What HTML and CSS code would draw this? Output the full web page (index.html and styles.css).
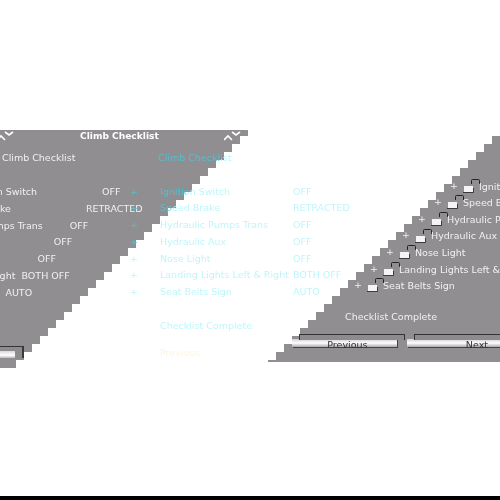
FILE: index.html
```html
<!DOCTYPE html>
<html lang="en">
<head>
<meta charset="utf-8">
<title>Climb Checklist</title>
<link rel="stylesheet" href="styles.css">
</head>
<body>
<main class="stage">
  <svg class="backdrop" width="500" height="496" viewBox="0 0 500 496" aria-hidden="true">
    <polygon class="shape" points="0,130 248,130 248,136 240,136 240,144 232,144 232,152 224,152 224,160 216,160 216,168 208,168 208,176 200,176 200,184 192,184 192,192 184,192 184,200 176,200 176,208 168,208 168,216 160,216 160,224 152,224 152,232 144,232 144,240 136,240 136,248 128,248 128,256 120,256 120,264 112,264 112,272 104,272 104,280 96,280 96,288 88,288 88,296 80,296 80,304 72,304 72,312 64,312 64,320 56,320 56,328 48,328 48,336 40,336 40,344 32,344 32,352 24,352 24,360 16,360 16,368 0,368"/>
    <polygon class="shape" points="500,128 500,362 268,362 268,360 276,360 276,352 284,352 284,344 292,344 292,336 300,336 300,328 308,328 308,320 316,320 316,312 324,312 324,304 332,304 332,296 340,296 340,288 348,288 348,280 356,280 356,272 364,272 364,264 372,264 372,256 380,256 380,248 388,248 388,240 396,240 396,232 404,232 404,224 412,224 412,216 420,216 420,208 428,208 428,200 436,200 436,192 444,192 444,184 452,184 452,176 460,176 460,168 468,168 468,160 476,160 476,152 484,152 484,144 492,144 492,136 500,136"/>
  </svg>

  <section class="panel panel-left">
    <header class="titlebar">
      <svg class="chev chev-l" width="18" height="10" viewBox="0 0 18 10" aria-hidden="true"><path d="M0 9l4-4 4 4M8 1l4 3 4-3"/></svg>
      <h1 class="title">Climb Checklist</h1>
      <svg class="chev chev-r" width="18" height="10" viewBox="0 0 18 10" aria-hidden="true"><path d="M0 9l4-4 4 4M8 1l4 3 4-3"/></svg>
    </header>
    <h2 class="subtitle">Climb Checklist</h2>
    <ul class="rows rows-left">
      <li class="row"><span class="label">Ignition Switch</span><span>OFF</span></li>
      <li class="row"><span class="label">Speed Brake</span><span>RETRACTED</span></li>
      <li class="row"><span class="label">Hydraulic Pumps Trans</span><span>OFF</span></li>
      <li class="row"><span class="label">Hydraulic Aux</span><span>OFF</span></li>
      <li class="row"><span class="label">Nose Light</span><span>OFF</span></li>
      <li class="row"><span class="label">Landing Lights Left &amp; Right</span><span>BOTH OFF</span></li>
      <li class="row"><span class="label">Seat Belts Sign</span><span>AUTO</span></li>
    </ul>
    <div class="left-btn"></div>
  </section>

  <section class="panel panel-mid">
    <h2 class="mid-title">Climb Checklist</h2>
    <ul class="rows">
      <li class="mid-row"><span>+</span><span>Ignition Switch</span><span>OFF</span></li>
      <li class="mid-row"><span>+</span><span>Speed Brake</span><span>RETRACTED</span></li>
      <li class="mid-row"><span>+</span><span>Hydraulic Pumps Trans</span><span>OFF</span></li>
      <li class="mid-row"><span>+</span><span>Hydraulic Aux</span><span>OFF</span></li>
      <li class="mid-row"><span>+</span><span>Nose Light</span><span>OFF</span></li>
      <li class="mid-row"><span>+</span><span>Landing Lights Left &amp; Right</span><span>BOTH OFF</span></li>
      <li class="mid-row"><span>+</span><span>Seat Belts Sign</span><span>AUTO</span></li>
    </ul>
    <p class="mid-done">Checklist Complete</p>
  </section>
  <p class="ghost">Previous</p>

  <section class="panel panel-right">
    <ul class="rows rows-right">
      <li class="check"><span>+</span><svg class="box" width="18" height="14" viewBox="0 0 18 14" aria-hidden="true"><path class="arch" d="M8.5 5V1.5q0-1 1-1h6q1 0 1 1V5"/><rect class="fill" x="1" y="7" width="9" height="6"/><path class="edge" d="M0 13.5h10.500V9"/></svg><span class="check-text">Ignition Switch</span></li>
      <li class="check"><span>+</span><svg class="box" width="18" height="14" viewBox="0 0 18 14" aria-hidden="true"><path class="arch" d="M8.5 5V1.5q0-1 1-1h6q1 0 1 1V5"/><rect class="fill" x="1" y="7" width="9" height="6"/><path class="edge" d="M0 13.5h10.500V9"/></svg><span class="check-text">Speed Brake</span></li>
      <li class="check"><span>+</span><svg class="box" width="18" height="14" viewBox="0 0 18 14" aria-hidden="true"><path class="arch" d="M8.5 5V1.5q0-1 1-1h6q1 0 1 1V5"/><rect class="fill" x="1" y="7" width="9" height="6"/><path class="edge" d="M0 13.5h10.500V9"/></svg><span class="check-text">Hydraulic Pumps Trans</span></li>
      <li class="check"><span>+</span><svg class="box" width="18" height="14" viewBox="0 0 18 14" aria-hidden="true"><path class="arch" d="M8.5 5V1.5q0-1 1-1h6q1 0 1 1V5"/><rect class="fill" x="1" y="7" width="9" height="6"/><path class="edge" d="M0 13.5h10.500V9"/></svg><span class="check-text">Hydraulic Aux</span></li>
      <li class="check"><span>+</span><svg class="box" width="18" height="14" viewBox="0 0 18 14" aria-hidden="true"><path class="arch" d="M8.5 5V1.5q0-1 1-1h6q1 0 1 1V5"/><rect class="fill" x="1" y="7" width="9" height="6"/><path class="edge" d="M0 13.5h10.500V9"/></svg><span class="check-text">Nose Light</span></li>
      <li class="check"><span>+</span><svg class="box" width="18" height="14" viewBox="0 0 18 14" aria-hidden="true"><path class="arch" d="M8.5 5V1.5q0-1 1-1h6q1 0 1 1V5"/><rect class="fill" x="1" y="7" width="9" height="6"/><path class="edge" d="M0 13.5h10.500V9"/></svg><span class="check-text">Landing Lights Left &amp; Right</span></li>
      <li class="check"><span>+</span><svg class="box" width="18" height="14" viewBox="0 0 18 14" aria-hidden="true"><path class="arch" d="M8.5 5V1.5q0-1 1-1h6q1 0 1 1V5"/><rect class="fill" x="1" y="7" width="9" height="6"/><path class="edge" d="M0 13.5h10.500V9"/></svg><span class="check-text">Seat Belts Sign</span></li>
    </ul>
    <p class="done">Checklist Complete</p>
    <div class="buttons">
      <button class="btn btn-prev" type="button">Previous</button>
      <button class="btn btn-next" type="button">Next</button>
    </div>
  </section>
</main>
<footer class="bar"></footer>
</body>
</html>
```
FILE: styles.css
```css
* { box-sizing: border-box; }

html, body {
  margin: 0;
  width: 500px;
  height: 500px;
  overflow: hidden;
  background: #fff;
}

body {
  display: flex;
  flex-direction: column;
  font: 9.5px/1 "DejaVu Sans", sans-serif;
  color: #f1f1f1;
}

h1, h2, p, ul { margin: 0; padding: 0; font: inherit; list-style: none; }

.stage {
  position: relative;
  flex: 1;
  overflow: hidden;
  filter: blur(0.5px);
}

.backdrop { position: absolute; inset: 0; }
.shape { fill: #908e90; }

.panel { position: absolute; }

/* Left panel */
.panel-left { left: 0; top: 130px; width: 250px; }

.titlebar {
  position: relative;
  height: 14px;
  display: flex;
  align-items: center;
  padding-left: 80px;
}

.title { color: #fff; font-weight: bold; font-size: 9.1px; }

.chev { position: absolute; top: 1px; fill: none; stroke: #fff; stroke-width: 1.6; }
.chev-l { left: -3px; }
.chev-r { left: 224px; }

.subtitle { margin: 9px 0 0 2px; height: 10px; line-height: 10px; }

.rows-left { margin-top: 21px; }

.row {
  display: flex;
  height: 16.8px;
  line-height: 16.8px;
  white-space: nowrap;
  margin-left: calc(-33px - 16.1px * var(--i, 0));
}

.label { flex: 0 0 135px; }

.row:nth-child(2), .check:nth-child(2) { --i: 1; }
.row:nth-child(3), .check:nth-child(3) { --i: 2; }
.row:nth-child(4), .check:nth-child(4) { --i: 3; }
.row:nth-child(5), .check:nth-child(5) { --i: 4; }
.row:nth-child(6), .check:nth-child(6) { --i: 5; }
.row:nth-child(7), .check:nth-child(7) { --i: 6; }

.left-btn {
  position: relative;
  width: 24px;
  height: 12px;
  margin-top: 44px;
  border-top: 1px solid #333;
  border-right: 2px solid #3a3a3a;
  background: #8d8b8d;
}

.left-btn::after {
  content: "";
  position: absolute;
  left: 0;
  top: 4px;
  width: 15px;
  height: 7px;
  background: linear-gradient(#d8d8d8, #fff 60%, #bbb);
}

/* Middle panel: teal over the grey, pale over the white */
.panel-mid {
  left: 130px;
  top: 150px;
  width: 230px;
  height: 190px;
  padding-top: 3px;
  color: transparent;
  background: linear-gradient(135deg, #55bfce 0 24%, #b9f4fa 24% 100%);
  -webkit-background-clip: text;
  background-clip: text;
}

.mid-title { margin-left: 28px; height: 10px; line-height: 10px; }

.panel-mid .rows { margin-top: 20.5px; }

.mid-row {
  display: grid;
  grid-template-columns: 30px 133px auto;
  height: 16.8px;
  line-height: 16.8px;
  white-space: nowrap;
}

.mid-done { margin: 17px 0 0 30px; line-height: 16.8px; }

.ghost {
  position: absolute;
  left: 160px;
  top: 348px;
  color: #fbf6dc;
}

/* Right panel */
.panel-right { left: 260px; top: 177px; width: 240px; }

.check {
  display: flex;
  align-items: center;
  height: 16.6px;
  white-space: nowrap;
  margin-left: calc(190px - 16px * var(--i, 0));
}

.check > * { flex: none; }
.check > span:first-child { width: 13px; }

.box { margin-right: -2px; margin-top: 1px; }
.arch { fill: none; stroke: #222; stroke-width: 1; }
.fill { fill: #f4f4f4; }
.edge { fill: none; stroke: #3b3b3b; stroke-width: 1; }

.check-text { margin-top: 2px; }

.done { margin: 16px 0 0 85px; line-height: 16px; }

.buttons {
  display: flex;
  gap: 10px;
  margin: 14px 0 0 32px;
}

.btn {
  position: relative;
  height: 8px;
  padding: 0 0 0 6px;
  border: 0;
  color: #333;
  font: 9.5px/11px "DejaVu Sans", sans-serif;
  overflow: visible;
  background: linear-gradient(#cfcfcf, #fff 50%, #a9a9a9);
  box-shadow: 1px 1px 0 #444;
}

.btn::before {
  content: "";
  position: absolute;
  left: 7px;
  right: -8px;
  top: -5px;
  height: 5px;
  border: 1px solid #333;
  border-bottom: 0;
  background: #8d8b8d;
}

.btn-prev { width: 113px; }
.btn-next { width: 100px; padding: 0 12px 0 0; text-align: right; }

.bar {
  flex: 0 0 4px;
  background: #000;
}
```
